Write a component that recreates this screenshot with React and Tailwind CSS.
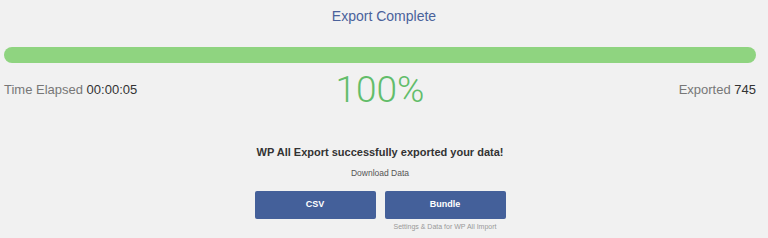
export default function App() {
  return (
    <div className="w-full h-[238px] bg-[#f1f1f1] overflow-hidden" style={{ fontFamily: '"Liberation Sans", Arial, sans-serif' }}>
      <div className="pt-[8px] text-center text-[14px] leading-[16px] text-[#4a629b]">Export Complete</div>
      <div className="pl-[4px] pr-[12px]">
        <div className="mt-[23px] h-[16px] rounded-full bg-[#8fd480]" />
        <div className="mt-[7px] h-[40px] grid grid-cols-[1fr_auto_1fr] items-center">
          <div className="text-[13px] leading-[16px] text-[#777]">
            Time Elapsed <span className="text-[#333]">00:00:05</span>
          </div>
          <div className="text-[37px] leading-[40px] font-light text-[#62bd6a]" style={{ fontFamily: 'Roboto, "Liberation Sans", sans-serif' }}>100%</div>
          <div className="text-right text-[13px] leading-[16px] text-[#777]">
            Exported <span className="text-[#333]">745</span>
          </div>
        </div>
        <div className="mt-[35px] text-center text-[11px] leading-[14px] font-bold text-[#333]">
          WP All Export successfully exported your data!
        </div>
        <div className="mt-[8px] text-center text-[8.5px] leading-[12px] text-[#555]">Download Data</div>
        <div className="mt-[12px] flex justify-center gap-[9px]">
          <div className="flex flex-col items-center">
            <div className="w-[121px] h-[28px] rounded-[2px] bg-[#44609a] flex items-center justify-center text-white text-[9px] font-bold">CSV</div>
          </div>
          <div className="flex flex-col items-center">
            <div className="w-[121px] h-[28px] rounded-[2px] bg-[#44609a] flex items-center justify-center text-white text-[9px] font-bold">Bundle</div>
            <div className="mt-[3px] text-[7px] leading-[9px] text-[#999]">Settings &amp; Data for WP All Import</div>
          </div>
        </div>
      </div>
    </div>
  );
}
